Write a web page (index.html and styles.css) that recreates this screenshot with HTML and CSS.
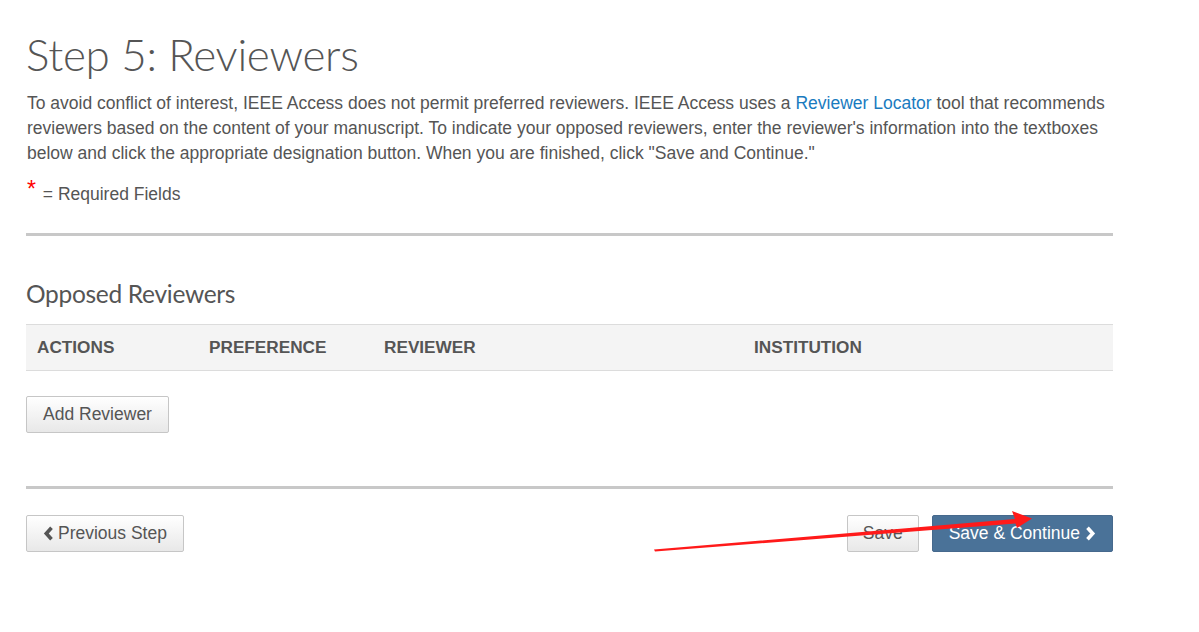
FILE: index.html
```html
<!DOCTYPE html>
<html>
<head>
<meta charset="utf-8">
<link rel="stylesheet" href="styles.css">
</head>
<body>
<div class="page">
  <h1 class="title">Step 5: Reviewers</h1>
  <p class="intro">To avoid conflict of interest, IEEE Access does not permit preferred reviewers. IEEE Access uses a <a class="link" href="#">Reviewer Locator</a> tool that recommends reviewers based on the content of your manuscript. To indicate your opposed reviewers, enter the reviewer's information into the textboxes below and click the appropriate designation button. When you are finished, click "Save and Continue."</p>
  <p class="required"><span class="star">*</span> = Required Fields</p>
  <div class="rule"></div>
  <h2 class="subtitle">Opposed Reviewers</h2>
  <div class="thead">
    <div class="th c-actions">ACTIONS</div>
    <div class="th c-pref">PREFERENCE</div>
    <div class="th c-rev">REVIEWER</div>
    <div class="th c-inst">INSTITUTION</div>
  </div>
  <div class="add-row"><button class="btn">Add Reviewer</button></div>
  <div class="rule rule-bottom"></div>
  <div class="nav">
    <button class="btn"><svg class="chev" viewBox="0 0 11 15" width="11" height="15"><path d="M8.5 1.8 L3.3 7.5 L8.5 13.2" fill="none" stroke="currentColor" stroke-width="3.6" stroke-linejoin="miter"/></svg>Previous Step</button>
    <div class="nav-right">
      <button class="btn btn-save">Save</button>
      <button class="btn btn-primary">Save &amp; Continue<svg class="chev chev-r" viewBox="0 0 11 15" width="11" height="15"><path d="M2.5 1.8 L7.7 7.5 L2.5 13.2" fill="none" stroke="currentColor" stroke-width="3.6" stroke-linejoin="miter"/></svg></button>
    </div>
  </div>
</div>
<svg class="arrow" width="1199" height="632" viewBox="0 0 1199 632"><polygon points="654,549.5 1015,519 1012,511 1032,518.5 1017,528 1015.5,523.5 655,551.5" fill="#ff1a1a"/></svg>
</body>
</html>
```

FILE: styles.css
```css
html, body {
  margin: 0;
  padding: 0;
  background: #fff;
}
body {
  font-family: "Liberation Sans", Arial, sans-serif;
  color: #555;
  font-size: 17.5px;
}
.page {
  width: 1087px;
  padding: 24px 0 0 26px;
}
.title {
  font-family: Lato, "Open Sans", sans-serif;
  font-weight: 300;
  font-size: 44px;
  line-height: 60px;
  margin: 0;
  color: #555;
  letter-spacing: -0.3px;
}
.intro {
  margin: 7px 0 0 0;
  line-height: 25px;
  padding-left: 1px;
}
.link {
  color: #1a7bbf;
  text-decoration: none;
}
.required {
  margin: 14px 0 0 1px;
  line-height: 24px;
}
.star {
  color: #f00;
  font-size: 23px;
  position: relative;
  top: -3px;
  margin-right: 2px;
}
.rule {
  height: 3px;
  background: #c8c8c8;
  margin-top: 27px;
}
.subtitle {
  font-family: Lato, "Open Sans", sans-serif;
  font-weight: 400;
  font-size: 24.5px;
  line-height: 32px;
  margin: 42px 0 0 0;
  color: #555;
  letter-spacing: -0.3px;
}
.thead {
  margin-top: 14px;
  display: grid;
  grid-template-columns: 172px 175px 370px 1fr;
  background: #f4f4f4;
  border-top: 1px solid #dcdcdc;
  border-bottom: 1px solid #dcdcdc;
  height: 45px;
  align-items: center;
  padding-left: 11px;
}
.th {
  font-weight: bold;
  font-size: 17.2px;
  color: #555;
}
.add-row {
  padding-top: 25px;
}
.btn {
  font-family: "Liberation Sans", Arial, sans-serif;
  font-size: 17.5px;
  color: #555;
  height: 37px;
  padding: 0 16px;
  border: 1px solid #c6c6c6;
  border-radius: 2px;
  background: linear-gradient(#fff, #e8e8e8);
  display: inline-flex;
  align-items: center;
  cursor: pointer;
}
.rule-bottom {
  margin-top: 53px;
}
.nav {
  display: flex;
  justify-content: space-between;
  margin-top: 26px;
}
.nav-right {
  display: flex;
  gap: 13px;
}
.chev {
  margin-right: 4px;
}
.chev-r {
  margin: 0 0 0 5px;
}
.btn-save {
  padding: 0 15px;
}
.btn-primary {
  background: #4a7298;
  border-color: #46698d;
  color: #fff;
}
.arrow {
  position: absolute;
  left: 0;
  top: 0;
  pointer-events: none;
}
```
